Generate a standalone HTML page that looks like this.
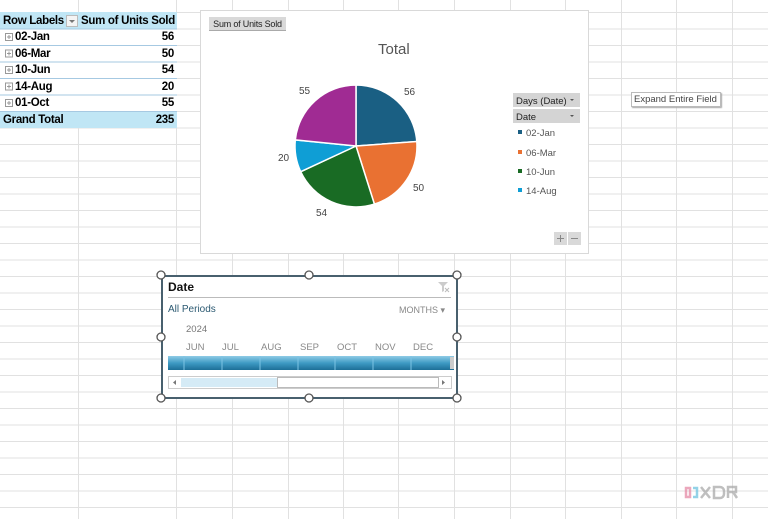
<!DOCTYPE html>
<html><head><meta charset="utf-8"><style>
*{margin:0;padding:0;box-sizing:border-box}
body{width:768px;height:519px;overflow:hidden;background:#fff;font-family:"Liberation Sans",sans-serif;position:relative}
.abs{position:absolute;white-space:nowrap}
.tbl div{position:absolute;font-weight:bold;font-size:11.5px;letter-spacing:-0.3px;color:#000;line-height:16px;white-space:nowrap}
</style></head><body>
<svg class="abs" style="left:0;top:0" width="768" height="519">
<g stroke="#e1e1e1" stroke-width="1">
<line x1="78.5" y1="0" x2="78.5" y2="519"/><line x1="176.5" y1="0" x2="176.5" y2="519"/>
<line x1="232.5" y1="0" x2="232.5" y2="519"/><line x1="288.5" y1="0" x2="288.5" y2="519"/>
<line x1="343.5" y1="0" x2="343.5" y2="519"/><line x1="398.5" y1="0" x2="398.5" y2="519"/>
<line x1="454.5" y1="0" x2="454.5" y2="519"/><line x1="510.5" y1="0" x2="510.5" y2="519"/>
<line x1="565.5" y1="0" x2="565.5" y2="519"/><line x1="621.5" y1="0" x2="621.5" y2="519"/>
<line x1="676.5" y1="0" x2="676.5" y2="519"/><line x1="732.5" y1="0" x2="732.5" y2="519"/>
<line x1="0" y1="12.5" x2="768" y2="12.5"/><line x1="0" y1="29" x2="768" y2="29"/>
<line x1="0" y1="45.5" x2="768" y2="45.5"/><line x1="0" y1="62" x2="768" y2="62"/>
<line x1="0" y1="78.5" x2="768" y2="78.5"/><line x1="0" y1="95" x2="768" y2="95"/>
<line x1="0" y1="111.5" x2="768" y2="111.5"/><line x1="0" y1="128" x2="768" y2="128"/>
<line x1="0" y1="144.5" x2="768" y2="144.5"/><line x1="0" y1="161" x2="768" y2="161"/>
<line x1="0" y1="177.5" x2="768" y2="177.5"/><line x1="0" y1="194" x2="768" y2="194"/>
<line x1="0" y1="210.5" x2="768" y2="210.5"/><line x1="0" y1="227" x2="768" y2="227"/>
<line x1="0" y1="243.5" x2="768" y2="243.5"/><line x1="0" y1="260" x2="768" y2="260"/>
<line x1="0" y1="276.5" x2="768" y2="276.5"/><line x1="0" y1="293" x2="768" y2="293"/>
<line x1="0" y1="309.5" x2="768" y2="309.5"/><line x1="0" y1="326" x2="768" y2="326"/>
<line x1="0" y1="342.5" x2="768" y2="342.5"/><line x1="0" y1="359" x2="768" y2="359"/>
<line x1="0" y1="375.5" x2="768" y2="375.5"/><line x1="0" y1="392" x2="768" y2="392"/>
<line x1="0" y1="408.5" x2="768" y2="408.5"/><line x1="0" y1="425" x2="768" y2="425"/>
<line x1="0" y1="441.5" x2="768" y2="441.5"/><line x1="0" y1="458" x2="768" y2="458"/>
<line x1="0" y1="474.5" x2="768" y2="474.5"/><line x1="0" y1="491" x2="768" y2="491"/>
<line x1="0" y1="507.5" x2="768" y2="507.5"/>
</g>
<rect x="0" y="12" width="177" height="17" fill="#c0e6f5"/>
<rect x="0" y="29" width="177" height="83" fill="#fff"/>
<rect x="0" y="111" width="177" height="17" fill="#c0e6f5"/>
<g stroke="#a6c9e2"><line x1="0" y1="29" x2="177" y2="29"/><line x1="0" y1="45.5" x2="177" y2="45.5"/><line x1="0" y1="62" x2="177" y2="62"/><line x1="0" y1="78.5" x2="177" y2="78.5"/><line x1="0" y1="95" x2="177" y2="95"/><line x1="0" y1="111.5" x2="177" y2="111.5"/></g>
<rect x="66.5" y="15.5" width="11" height="11" fill="#f4f4f4" stroke="#bbb"/>
<path d="M69 20 L75 20 L72 23 Z" fill="#777"/>
<g fill="none" stroke="#999"><rect x="5.5" y="33.5" width="7" height="7"/><rect x="5.5" y="50" width="7" height="7"/><rect x="5.5" y="66.5" width="7" height="7"/><rect x="5.5" y="83" width="7" height="7"/><rect x="5.5" y="99.5" width="7" height="7"/></g>
<g stroke="#999"><path d="M7 37h4M9 35v4M7 53.5h4M9 51.5v4M7 70h4M9 68v4M7 86.5h4M9 84.5v4M7 103h4M9 101v4"/></g>
</svg>
<div class="tbl">
<div style="left:3px;top:13px">Row Labels</div>
<div style="left:81px;top:13px">Sum of Units Sold</div>
<div style="left:15px;top:29px">02-Jan</div><div style="right:594px;top:29px">56</div>
<div style="left:15px;top:46px">06-Mar</div><div style="right:594px;top:46px">50</div>
<div style="left:15px;top:62px">10-Jun</div><div style="right:594px;top:62px">54</div>
<div style="left:15px;top:79px">14-Aug</div><div style="right:594px;top:79px">20</div>
<div style="left:15px;top:95px">01-Oct</div><div style="right:594px;top:95px">55</div>
<div style="left:3px;top:112px">Grand Total</div><div style="right:594px;top:112px">235</div>
</div>

<div class="abs" style="left:200px;top:10px;width:389px;height:244px;background:#fff;border:1px solid #d9d9d9"></div>
<div class="abs" style="left:209px;top:17px;width:77px;height:14px;background:#d9d9d9;border-bottom:1px solid #aaa;font-size:9px;letter-spacing:-0.2px;line-height:14px;text-align:center;color:#222">Sum of Units Sold</div>
<div class="abs" style="left:378px;top:41px;font-size:15px;color:#555">Total</div>
<svg class="abs" style="left:0;top:0" width="768" height="519">
<g stroke="#fff" stroke-width="1.5">
<path d="M356 146 L356 85 A61 61 0 0 1 416.8 141.5 Z" fill="#1a5f83"/>
<path d="M356 146 L416.8 141.5 A61 61 0 0 1 374.4 204.1 Z" fill="#e97132"/>
<path d="M356 146 L374.4 204.1 A61 61 0 0 1 300.7 171.7 Z" fill="#196b24"/>
<path d="M356 146 L300.7 171.7 A61 61 0 0 1 295.3 139.9 Z" fill="#0f9ed5"/>
<path d="M356 146 L295.3 139.9 A61 61 0 0 1 356 85 Z" fill="#a02b93"/>
</g>
<g font-family="Liberation Sans" font-size="10" fill="#444">
<text x="404" y="95">56</text><text x="413" y="191">50</text><text x="316" y="216">54</text><text x="278" y="161">20</text><text x="299" y="94">55</text>
</g>
<rect x="513" y="93" width="67" height="14" fill="#d4d4d4"/>
<rect x="513" y="109" width="67" height="14" fill="#d4d4d4"/>
<text x="516" y="104" font-family="Liberation Sans" font-size="9.5" fill="#222">Days (Date)</text>
<text x="516" y="120" font-family="Liberation Sans" font-size="9.5" fill="#222">Date</text>
<path d="M570 99l4 0-2 2z M570 115l4 0-2 2z" fill="#555"/>
<rect x="518" y="130" width="4" height="4" fill="#1a5f83"/>
<rect x="518" y="150" width="4" height="4" fill="#e97132"/>
<rect x="518" y="169" width="4" height="4" fill="#196b24"/>
<rect x="518" y="188" width="4" height="4" fill="#0f9ed5"/>
<g font-family="Liberation Sans" font-size="9.5" fill="#555">
<text x="526" y="136">02-Jan</text><text x="526" y="156">06-Mar</text><text x="526" y="175">10-Jun</text><text x="526" y="194">14-Aug</text>
</g>
<rect x="554" y="232" width="13" height="13" fill="#d9d9d9"/><rect x="568" y="232" width="13" height="13" fill="#d9d9d9"/>
<path d="M557 238.5h7M560.5 235v7M571 238.5h7" stroke="#888"/>
</svg>
<div class="abs" style="left:631px;top:92px;width:90px;height:15px;border:1px solid #bbb;box-shadow:1px 1px 1px #aaa;background:#fff;font-size:9.5px;line-height:13px;padding-left:2px;color:#444">Expand Entire Field</div>

<div class="abs" style="left:161px;top:275px;width:297px;height:124px;background:#fff;border:2px solid #48606e"></div>
<div class="abs" style="left:168px;top:280px;font-size:12px;font-weight:bold;color:#111">Date</div>
<div class="abs" style="left:168px;top:297px;width:283px;height:1px;background:#bbb"></div>
<div class="abs" style="left:168px;top:304px;font-size:10px;color:#2c5a72">All Periods</div>
<div class="abs" style="left:399px;top:305px;font-size:9px;color:#888">MONTHS ▾</div>
<div class="abs" style="left:186px;top:324px;font-size:9.5px;color:#777">2024</div>
<div class="abs" style="left:186px;top:342px;font-size:9.5px;color:#888">JUN</div>
<div class="abs" style="left:222px;top:342px;font-size:9.5px;color:#888">JUL</div>
<div class="abs" style="left:261px;top:342px;font-size:9.5px;color:#888">AUG</div>
<div class="abs" style="left:300px;top:342px;font-size:9.5px;color:#888">SEP</div>
<div class="abs" style="left:337px;top:342px;font-size:9.5px;color:#888">OCT</div>
<div class="abs" style="left:375px;top:342px;font-size:9.5px;color:#888">NOV</div>
<div class="abs" style="left:413px;top:342px;font-size:9.5px;color:#888">DEC</div>
<svg class="abs" style="left:0;top:0" width="768" height="519">
<defs><linearGradient id="g" x1="0" y1="0" x2="0" y2="1"><stop offset="0" stop-color="#8fcbe6"/><stop offset="0.5" stop-color="#3e9ac4"/><stop offset="1" stop-color="#1d6f97"/></linearGradient></defs>
<rect x="168" y="356" width="286" height="14" fill="url(#g)"/>
<g stroke="#7cc4e4"><path d="M184 356v14M222 356v14M260 356v14M298 356v14M335 356v14M373 356v14M411 356v14"/></g>
<rect x="450" y="357" width="4" height="12" fill="#ccc"/>
<rect x="168.5" y="376.5" width="283" height="12" fill="#fff" stroke="#ccc"/>
<rect x="181" y="378" width="96" height="9" fill="#d5ebf6"/>
<rect x="277.5" y="377.5" width="161" height="10" fill="#fff" stroke="#bbb"/>
<path d="M176 380v5l-3-2.5z M442 380v5l3-2.5z" fill="#777"/>
<path d="M438 282h10l-4 4v5l-2 1v-6z" fill="#ccc"/><path d="M445 288l4 4M449 288l-4 4" stroke="#bbb"/>
<g fill="#fff" stroke="#555" stroke-width="1.3">
<circle cx="161" cy="275" r="4"/><circle cx="309" cy="275" r="4"/><circle cx="457" cy="275" r="4"/>
<circle cx="161" cy="337" r="4"/><circle cx="457" cy="337" r="4"/>
<circle cx="161" cy="398" r="4"/><circle cx="309" cy="398" r="4"/><circle cx="457" cy="398" r="4"/>
</g>
<g stroke-width="2.5" fill="none" opacity="0.75">
<path d="M686 488h4v9h-4z" stroke="#e58aa6"/>
<path d="M693 488h4v9h-4" stroke="#6fc3e0"/>
<path d="M701 487l9 11M710 487l-9 11" stroke="#aaa"/>
<path d="M714 487h6a4 4 0 0 1 4 4v3a4 4 0 0 1-4 4h-6z" stroke="#aaa"/>
<path d="M728 498v-11h8v5h-8M733 492l4 6" stroke="#aaa"/>
</g>
</svg>
</body></html>
